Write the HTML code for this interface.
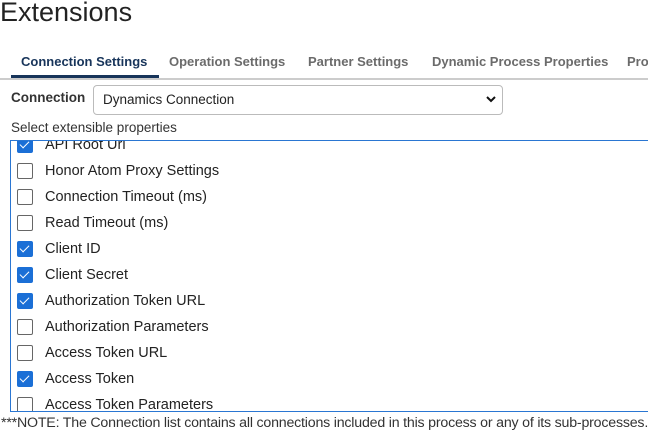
<!DOCTYPE html>
<html><head><style>
body{margin:0;width:648px;height:437px;overflow:hidden;background:#fff;font-family:"Liberation Sans",sans-serif;color:#222;position:relative}
.a{position:absolute;white-space:nowrap}
.tab{position:absolute;top:54px;font-size:13px;font-weight:bold;color:#6b6b6b;white-space:nowrap}
.box{position:absolute;left:10px;top:140px;width:640px;height:270px;border:1px solid #2a76d2;border-right:none;overflow:hidden}
.row{position:absolute;left:6px;width:600px;height:26px;font-size:14.5px;color:#222;white-space:nowrap}
.cb{position:absolute;left:0;top:5px;width:14px;height:14px;border:1px solid #666;border-radius:2px;background:#fff}
.cb.on{background:#1b6fd6;border-color:#1b6fd6}
.cb.on:after{content:"";position:absolute;left:4px;top:1px;width:4px;height:8px;border:solid #fff;border-width:0 1.5px 1.5px 0;transform:rotate(45deg)}
.row span{position:absolute;left:28px;top:5px;white-space:nowrap}
</style></head><body>
<div class="a" style="left:0;top:-3px;font-size:27px;color:#222">Extensions</div>
<div class="tab" style="left:21px;color:#17345a">Connection Settings</div>
<div class="tab" style="left:169px">Operation Settings</div>
<div class="tab" style="left:308px">Partner Settings</div>
<div class="tab" style="left:432px">Dynamic Process Properties</div>
<div class="tab" style="left:627px">Pro</div>
<div class="a" style="left:0;top:78px;width:648px;height:2px;background:#ccc"></div>
<div class="a" style="left:11px;top:75px;width:148px;height:3px;background:#17345a"></div>
<div class="a" style="left:11px;top:90px;font-size:13.5px;font-weight:bold;color:#333">Connection</div>
<div class="a" style="left:93px;top:85px;width:408px;height:28px;border:1px solid #bbb;border-radius:4px"></div>
<div class="a" style="left:103px;top:92px;font-size:13.5px">Dynamics Connection</div>
<svg class="a" style="left:486px;top:95px" width="10" height="8"><path d="M1 2 L5 6 L9 2" stroke="#111" stroke-width="2" fill="none"/></svg>
<div class="a" style="left:11px;top:120px;font-size:13.5px;color:#333">Select extensible properties</div>
<div class="box">
<div class="row" style="top:-9px"><div class="cb on"></div><span>API Root Url</span></div>
<div class="row" style="top:17px"><div class="cb"></div><span>Honor Atom Proxy Settings</span></div>
<div class="row" style="top:43px"><div class="cb"></div><span>Connection Timeout (ms)</span></div>
<div class="row" style="top:69px"><div class="cb"></div><span>Read Timeout (ms)</span></div>
<div class="row" style="top:95px"><div class="cb on"></div><span>Client ID</span></div>
<div class="row" style="top:121px"><div class="cb on"></div><span>Client Secret</span></div>
<div class="row" style="top:147px"><div class="cb on"></div><span>Authorization Token URL</span></div>
<div class="row" style="top:173px"><div class="cb"></div><span>Authorization Parameters</span></div>
<div class="row" style="top:199px"><div class="cb"></div><span>Access Token URL</span></div>
<div class="row" style="top:225px"><div class="cb on"></div><span>Access Token</span></div>
<div class="row" style="top:251px"><div class="cb"></div><span>Access Token Parameters</span></div>
</div>
<div class="a" style="left:1px;top:415px;font-size:14.2px;color:#333;letter-spacing:-0.2px">***NOTE: The Connection list contains all connections included in this process or any of its sub-processes.</div>
</body></html>
